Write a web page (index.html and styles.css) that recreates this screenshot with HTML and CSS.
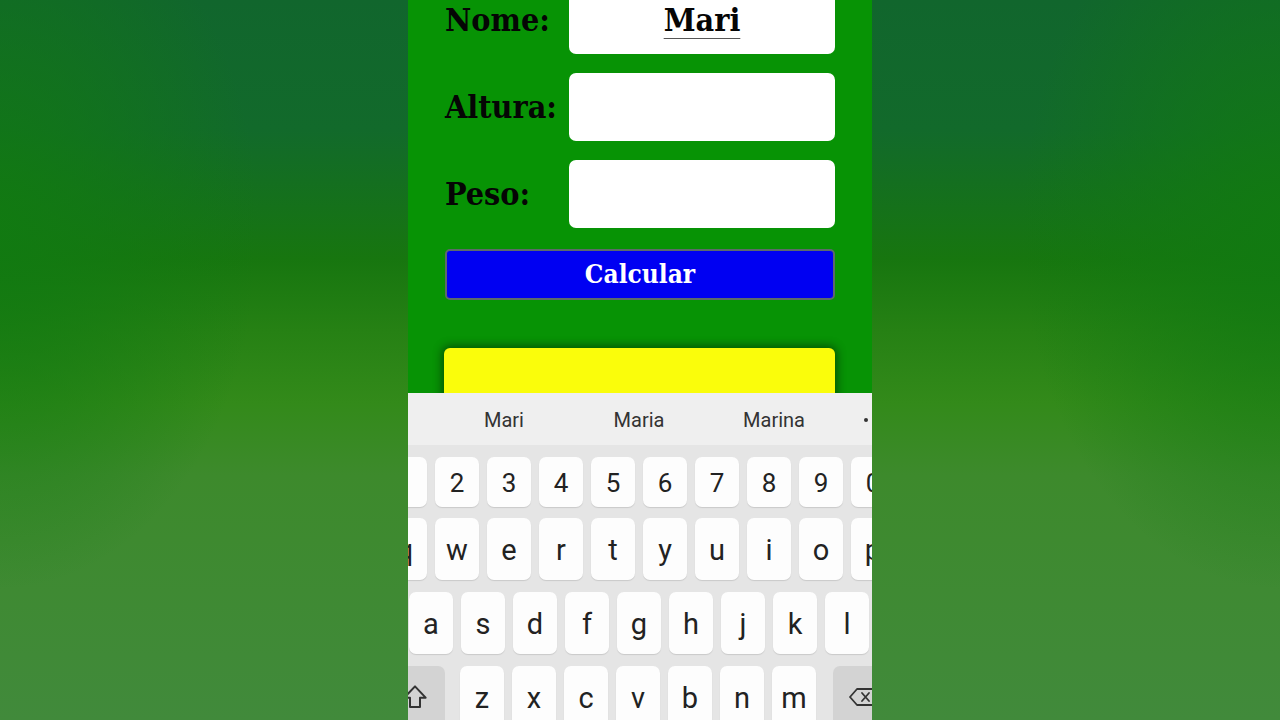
FILE: index.html
```html
<!DOCTYPE html>
<html lang="pt">
<head>
<meta charset="utf-8">
<title>Calculadora IMC</title>
<link rel="stylesheet" href="styles.css">
</head>
<body>
<div class="stage">
  <div class="phone">
    <div class="app">
      <form class="form">
        <div class="field">
          <label class="label">Nome:</label>
          <div class="input"><span class="typed">Mari</span></div>
        </div>
        <div class="field">
          <label class="label">Altura:</label>
          <div class="input"></div>
        </div>
        <div class="field">
          <label class="label">Peso:</label>
          <div class="input"></div>
        </div>
        <div class="btn">Calcular</div>
        <div class="result"></div>
      </form>
    </div>
    <div class="keyboard">
      <div class="suggest">
        <span class="sug">Mari</span>
        <span class="sug">Maria</span>
        <span class="sug">Marina</span>
        <span class="more"></span>
      </div>
      <div class="keys">
        <div class="row row-num">
          <span class="key num">1</span><span class="key num">2</span><span class="key num">3</span><span class="key num">4</span><span class="key num">5</span><span class="key num">6</span><span class="key num">7</span><span class="key num">8</span><span class="key num">9</span><span class="key num">0</span>
        </div>
        <div class="row">
          <span class="key">q</span><span class="key">w</span><span class="key">e</span><span class="key">r</span><span class="key">t</span><span class="key">y</span><span class="key">u</span><span class="key">i</span><span class="key">o</span><span class="key">p</span>
        </div>
        <div class="row">
          <span class="key">a</span><span class="key">s</span><span class="key">d</span><span class="key">f</span><span class="key">g</span><span class="key">h</span><span class="key">j</span><span class="key">k</span><span class="key">l</span>
        </div>
        <div class="row">
          <span class="key fn shift"><svg width="30" height="30" viewBox="0 0 24 24"><path d="M12 3.5 L3.5 12.5 H8 V20 H16 V12.5 H20.5 Z" fill="none" stroke="#333" stroke-width="1.6" stroke-linejoin="round"/></svg></span>
          <span class="key">z</span><span class="key">x</span><span class="key">c</span><span class="key">v</span><span class="key">b</span><span class="key">n</span><span class="key">m</span>
          <span class="key fn back"><svg width="30" height="22" viewBox="0 0 30 22"><path d="M9 3 H26 a2 2 0 0 1 2 2 V17 a2 2 0 0 1 -2 2 H9 L2 11 Z" fill="none" stroke="#333" stroke-width="1.8" stroke-linejoin="round"/><path d="M14 7 L21 15 M21 7 L14 15" stroke="#333" stroke-width="1.8" stroke-linecap="round"/></svg></span>
        </div>
      </div>
    </div>
  </div>
</div>
</body>
</html>
```

FILE: styles.css
```css
* { box-sizing: border-box; }

html, body {
  margin: 0;
  padding: 0;
  width: 1280px;
  height: 720px;
  overflow: hidden;
}

body {
  background:
    radial-gradient(ellipse 260px 360px at 0px 230px, rgba(17,122,17,0.95), rgba(17,122,17,0) 100%),
    radial-gradient(ellipse 260px 360px at 1280px 230px, rgba(17,122,17,0.95), rgba(17,122,17,0) 100%),
    linear-gradient(to bottom, #11662d 0%, #126a2b 18%, #17760f 36%, #268114 46%, #338a1a 56%, #3d8a2c 66%, #418a3b 100%);
}

.stage {
  display: flex;
  justify-content: center;
  height: 720px;
}

.phone {
  width: 464px;
  height: 720px;
  overflow: hidden;
  display: flex;
  flex-direction: column;
  position: relative;
}

/* ---------- app ---------- */
.app {
  height: 393px;
  flex: none;
  background: #079305;
  overflow: hidden;
}

.form {
  margin: -14px 0 0 0;
  padding: 0 37px;
  display: flex;
  flex-direction: column;
  font-family: "DejaVu Serif Condensed", "DejaVu Serif", serif;
  font-stretch: condensed;
  font-weight: bold;
}

.field {
  display: flex;
  align-items: center;
  height: 68px;
  margin-bottom: 19px;
}

.label {
  width: 124px;
  flex: none;
  font-size: 32px;
  color: #050505;
  line-height: 1;
}

.input {
  width: 266px;
  height: 68px;
  background: #ffffff;
  border-radius: 7px;
  display: flex;
  align-items: center;
  justify-content: center;
  padding-top: 0;
}

.typed {
  font-size: 32px;
  color: #050505;
  line-height: 1;
  text-decoration: underline;
  text-decoration-thickness: 1px;
  text-underline-offset: 7px;
  text-decoration-color: #555;
}

.btn {
  margin-top: 2px;
  height: 51px;
  background: #0000f2;
  border: 2px solid #5c6a6a;
  border-radius: 5px;
  color: #ffffff;
  font-size: 26px;
  display: flex;
  align-items: center;
  justify-content: center;
  padding-bottom: 2px;
}

.result {
  margin-top: 48px;
  margin-left: -1px;
  height: 80px;
  background: #fafd0b;
  border-radius: 6px;
  box-shadow: 0 0 10px 2px rgba(0, 0, 0, 0.45);
}

/* ---------- keyboard ---------- */
.keyboard {
  flex: 1;
  background: #e5e5e5;
  font-family: Roboto, "Noto Sans", sans-serif;
  position: relative;
}

.suggest {
  height: 52px;
  background: #efefef;
  display: flex;
  justify-content: center;
  align-items: center;
  padding-right: 2px;
  position: relative;
}

.sug {
  width: 135px;
  text-align: center;
  font-size: 20px;
  color: #333333;
  padding-top: 1px;
}

.more {
  position: absolute;
  right: 4px;
  top: 25px;
  width: 4px;
  height: 4px;
  border-radius: 50%;
  background: #333;
}

.keys {
  padding: 12px 2px 0 0;
}

.row {
  display: flex;
  justify-content: center;
  gap: 8px;
  margin-bottom: 12px;
}

.row-num { margin-bottom: 11px; }

.key {
  flex: none;
  width: 44px;
  height: 62px;
  background: #fdfdfd;
  border-radius: 7px;
  box-shadow: 0 1px 1px rgba(0, 0, 0, 0.12);
  display: flex;
  align-items: center;
  justify-content: center;
  font-size: 29px;
  color: #222222;
  padding-top: 2px;
}

.key.num {
  height: 50px;
  font-size: 26px;
}

.key.fn {
  width: 60px;
  background: #d3d3d3;
  box-shadow: none;
  padding-top: 0;
}

.key.shift { margin-right: 7px; }
.key.back { margin-left: 9px; }
```
